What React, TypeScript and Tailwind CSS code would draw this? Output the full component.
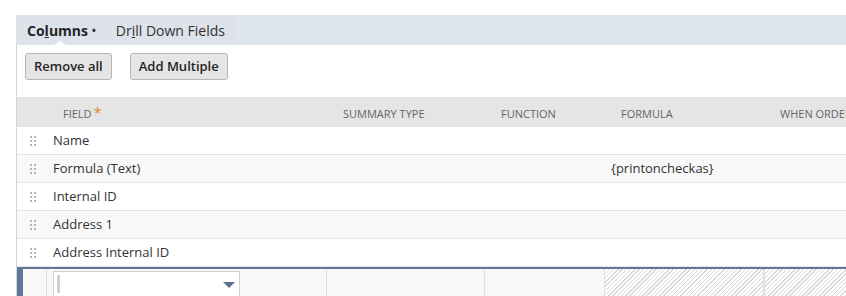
const font = { fontFamily: '"Open Sans", "Liberation Sans", sans-serif' }

const rows = [
  { name: 'Name', formula: '' },
  { name: 'Formula (Text)', formula: '{printoncheckas}' },
  { name: 'Internal ID', formula: '' },
  { name: 'Address 1', formula: '' },
  { name: 'Address Internal ID', formula: '' },
]

function Handle() {
  return (
    <div className="grid grid-cols-2 gap-[2px] w-[6px]">
      {[...Array(6)].map((_, i) => (
        <div key={i} className="w-[2px] h-[2px] bg-[#b5b5b5]"></div>
      ))}
    </div>
  )
}

export default function App() {
  return (
    <div className="w-[846px] h-[296px] bg-white overflow-hidden text-[#333]" style={font}>
      <div className="pt-[15px] pl-[16px]">
        {/* Tabs */}
        <div className="flex h-[30px] bg-[#dfe5ee]">
          <div className="flex bg-[#dee2ea] pr-[11px]">
            <div className="relative flex items-center pl-[11px] pr-[20px] text-[14px] font-bold text-[#262626]">
              Co<u>l</u>umns <span className="ml-[4px] text-[10px]">•</span>
              <div className="absolute left-[38px] bottom-0 w-0 h-0 border-l-[6px] border-r-[6px] border-b-[4px] border-l-transparent border-r-transparent border-b-white"></div>
            </div>
            <div className="flex items-center text-[14px] text-[#333]">
              Dr<u>i</u>ll Down Fields
            </div>
          </div>
        </div>

        <div className="border-l border-[#d5d5d5] overflow-hidden">
          {/* Buttons */}
          <div className="flex gap-[18px] pl-[8px] pt-[8px] pb-[17px]">
            <button className="h-[27px] px-[8px] bg-[#e5e5e5] border border-[#b5b5b5] rounded-[3px] text-[13px] font-semibold text-[#262626]">
              Remove all
            </button>
            <button className="h-[27px] px-[8px] bg-[#e5e5e5] border border-[#b5b5b5] rounded-[3px] text-[13px] font-semibold text-[#262626]">
              Add Multiple
            </button>
          </div>

          {/* Header */}
          <div className="flex h-[30px] bg-[#e5e5e5] text-[11px] text-[#666] uppercase items-center pt-[4px]">
            <div className="w-[30px] shrink-0"></div>
            <div className="w-[280px] shrink-0 pl-[16px] flex items-start">
              Field<span className="text-[#e08a2c] text-[15px] leading-none ml-[2px] -mt-[1px]">*</span>
            </div>
            <div className="w-[158px] shrink-0 pl-[16px]">Summary Type</div>
            <div className="w-[120px] shrink-0 pl-[16px]">Function</div>
            <div className="w-[160px] shrink-0 pl-[16px]">Formula</div>
            <div className="w-[120px] shrink-0 pl-[15px] whitespace-nowrap">When Order</div>
          </div>

          {/* Rows */}
          {rows.map((r, i) => (
            <div
              key={i}
              className={`flex h-[28px] items-center text-[13px] text-[#333] border-b border-[#e5e5e5] ${
                i % 2 === 1 ? 'bg-[#f8f8f8]' : 'bg-white'
              }`}
            >
              <div className="w-[30px] shrink-0 flex justify-center pl-[2px]">
                <Handle />
              </div>
              <div className="w-[280px] shrink-0 pl-[6px]">{r.name}</div>
              <div className="w-[158px] shrink-0"></div>
              <div className="w-[120px] shrink-0"></div>
              <div className="w-[160px] shrink-0 pl-[6px]">{r.formula}</div>
              <div className="flex-1"></div>
            </div>
          ))}

          {/* Edit row */}
          <div className="flex h-[30px] border-t-2 border-[#607799]">
            <div className="w-[6px] shrink-0 bg-[#607799]"></div>
            <div className="w-[24px] shrink-0 bg-[#f8f8f8] border-r border-[#e0e0e0]"></div>
            <div className="w-[280px] shrink-0 bg-[#f8f8f8] border-r border-[#e0e0e0] pl-[6px] pt-[2px]">
              <div className="w-[187px] h-[28px] bg-white border border-[#cfcfcf] flex items-start justify-between pl-[3px] pr-[4px] pt-[3px]">
                <div className="w-[3px] h-[18px] bg-[#cfcfcf]"></div>
                <div className="mt-[7px] w-0 h-0 border-l-[6px] border-r-[6px] border-t-[6px] border-l-transparent border-r-transparent border-t-[#5a7190]"></div>
              </div>
            </div>
            <div className="w-[158px] shrink-0 bg-[#f8f8f8] border-r border-[#e0e0e0]"></div>
            <div className="w-[120px] shrink-0 bg-[#f8f8f8] border-r border-[#e0e0e0]"></div>
            <div className="w-[160px] shrink-0 border-r-2 border-[#e0e0e0] bg-[repeating-linear-gradient(135deg,#d8d8d8_0px,#d8d8d8_1px,#ffffff_1px,#ffffff_3px)]"></div>
            <div className="flex-1 bg-[repeating-linear-gradient(135deg,#d8d8d8_0px,#d8d8d8_1px,#ffffff_1px,#ffffff_3px)]"></div>
          </div>
        </div>
      </div>
    </div>
  )
}
